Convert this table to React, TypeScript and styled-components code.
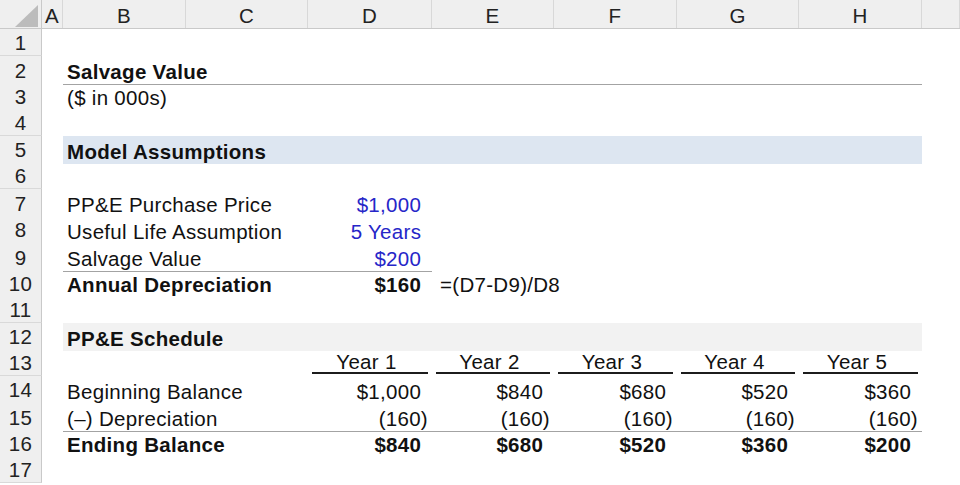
import React from "react";
import styled, { createGlobalStyle, css } from "styled-components";

const COLS = "42px 21px 123px 122px 124px 122px 123px 122px 123px 1fr";

const Global = createGlobalStyle`
  html, body { margin: 0; padding: 0; background: #fff; }
  body { font-family: "Liberation Sans", Arial, sans-serif; }
`;

const Sheet = styled.div`
  width: 960px;
  height: 485px;
  overflow: hidden;
  display: flex;
  flex-direction: column;
  background: #fff;
  font-family: "Liberation Sans", Arial, sans-serif;
  font-size: 20.5px;
  letter-spacing: 0.3px;
  color: #111;
`;

const HeaderRow = styled.div`
  display: grid;
  grid-template-columns: ${COLS};
  height: 29px;
  flex: none;
  box-sizing: border-box;
  background: #efefef;
  border-bottom: 1px solid #c9c9c9;
`;

const Corner = styled.div`
  display: flex;
  align-items: flex-end;
  justify-content: flex-end;
  padding: 0 3px 1px 0;
  border-right: 1px solid #c9c9c9;
  box-sizing: border-box;
`;

const ColHead = styled.div`
  display: flex;
  align-items: center;
  justify-content: center;
  padding-top: 4px;
  box-sizing: border-box;
  color: #222;
  border-right: 1px solid #d8d8d8;
`;

const Row = styled.div`
  display: grid;
  grid-template-columns: ${COLS};
  height: 26.7px;
  flex: none;
`;

const RowNum = styled.div`
  display: flex;
  align-items: center;
  justify-content: center;
  padding-top: 2px;
  box-sizing: border-box;
  background: #efefef;
  border-right: 1px solid #c9c9c9;
  border-bottom: 1px solid #d9d9d9;
  color: #222;
`;

type CellProps = {
  $span?: number;
  $align?: "left" | "right" | "center";
  $bold?: boolean;
  $blue?: boolean;
  $paren?: boolean;
  $bg?: string;
  $line?: boolean;
  $indent?: number;
};

const Cell = styled.div<CellProps>`
  display: flex;
  align-items: center;
  box-sizing: border-box;
  white-space: nowrap;
  min-width: 0;
  padding: 4px 4px 0 ${(p) => 4 + (p.$indent ?? 0)}px;
  grid-column: span ${(p) => p.$span ?? 1};
  justify-content: ${(p) =>
    p.$align === "right" ? "flex-end" : p.$align === "center" ? "center" : "flex-start"};
  font-weight: ${(p) => (p.$bold ? 700 : 400)};
  color: ${(p) => (p.$blue ? "#2626c8" : "#111")};
  background: ${(p) => p.$bg ?? "transparent"};
  ${(p) =>
    p.$paren &&
    css`
      padding-right: calc(4px + 0.333em);
    `}
  ${(p) =>
    p.$line &&
    css`
      border-bottom: 1px solid #a3a3a3;
    `}
`;

const YearCell = styled.div`
  display: flex;
  align-items: flex-end;
  padding: 0 4px 2px 4px;
  box-sizing: border-box;
`;

const YearLabel = styled.div`
  flex: 1;
  text-align: center;
  padding-right: 7px;
  line-height: 20px;
  border-bottom: 2px solid #1c1c1c;
`;

const Empty = styled.div``;

const CornerMark = () => (
  <svg width="23" height="22" viewBox="0 0 23 22">
    <polygon points="0,22 23,22 23,0" fill="#bcbcbc" />
  </svg>
);

const letters = ["A", "B", "C", "D", "E", "F", "G", "H", ""];

const years = ["Year 1", "Year 2", "Year 3", "Year 4", "Year 5"];
const begin = ["$1,000", "$840", "$680", "$520", "$360"];
const ending = ["$840", "$680", "$520", "$360", "$200"];

export default function App() {
  return (
    <>
      <Global />
      <Sheet>
        <HeaderRow>
          <Corner>
            <CornerMark />
          </Corner>
          {letters.map((l, i) => (
            <ColHead key={i}>{l}</ColHead>
          ))}
        </HeaderRow>

        <Row>
          <RowNum>1</RowNum>
        </Row>

        <Row>
          <RowNum>2</RowNum>
          <Empty />
          <Cell $span={7} $bold $line>
            Salvage Value
          </Cell>
        </Row>

        <Row>
          <RowNum>3</RowNum>
          <Empty />
          <Cell $span={2}>($ in 000s)</Cell>
        </Row>

        <Row>
          <RowNum>4</RowNum>
        </Row>

        <Row>
          <RowNum>5</RowNum>
          <Empty />
          <Cell $span={7} $bold $bg="#dde6f1">
            Model Assumptions
          </Cell>
        </Row>

        <Row>
          <RowNum>6</RowNum>
        </Row>

        <Row>
          <RowNum>7</RowNum>
          <Empty />
          <Cell $span={2}>PP&amp;E Purchase Price</Cell>
          <Cell $align="right" $blue $paren>
            $1,000
          </Cell>
        </Row>

        <Row>
          <RowNum>8</RowNum>
          <Empty />
          <Cell $span={2}>Useful Life Assumption</Cell>
          <Cell $align="right" $blue $paren>
            5 Years
          </Cell>
        </Row>

        <Row>
          <RowNum>9</RowNum>
          <Empty />
          <Cell $span={2} $line>
            Salvage Value
          </Cell>
          <Cell $align="right" $blue $paren $line>
            $200
          </Cell>
        </Row>

        <Row>
          <RowNum>10</RowNum>
          <Empty />
          <Cell $span={2} $bold>
            Annual Depreciation
          </Cell>
          <Cell $align="right" $bold $paren>
            $160
          </Cell>
          <Cell $span={2} $indent={4}>
            =(D7-D9)/D8
          </Cell>
        </Row>

        <Row>
          <RowNum>11</RowNum>
        </Row>

        <Row>
          <RowNum>12</RowNum>
          <Empty />
          <Cell $span={7} $bold $bg="#f2f2f2">
            PP&amp;E Schedule
          </Cell>
        </Row>

        <Row>
          <RowNum>13</RowNum>
          <Empty />
          <Empty style={{ gridColumn: "span 2" }} />
          {years.map((y) => (
            <YearCell key={y}>
              <YearLabel>{y}</YearLabel>
            </YearCell>
          ))}
        </Row>

        <Row>
          <RowNum>14</RowNum>
          <Empty />
          <Cell $span={2}>Beginning Balance</Cell>
          {begin.map((v, i) => (
            <Cell key={i} $align="right" $paren>
              {v}
            </Cell>
          ))}
        </Row>

        <Row>
          <RowNum>15</RowNum>
          <Empty />
          <Cell $span={2} $line>
            (–) Depreciation
          </Cell>
          {years.map((y) => (
            <Cell key={y} $align="right" $line>
              (160)
            </Cell>
          ))}
        </Row>

        <Row>
          <RowNum>16</RowNum>
          <Empty />
          <Cell $span={2} $bold>
            Ending Balance
          </Cell>
          {ending.map((v, i) => (
            <Cell key={i} $align="right" $bold $paren>
              {v}
            </Cell>
          ))}
        </Row>

        <Row>
          <RowNum>17</RowNum>
        </Row>
      </Sheet>
    </>
  );
}
